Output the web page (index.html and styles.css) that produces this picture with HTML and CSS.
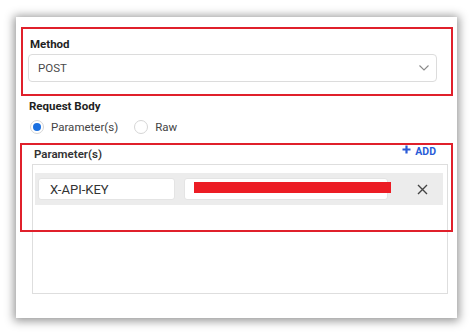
FILE: index.html
```html
<!DOCTYPE html>
<html>
<head>
<meta charset="utf-8">
<link rel="stylesheet" href="styles.css">
</head>
<body>
<div class="card">
  <div class="label">Method</div>
  <div class="select">
    <span>POST</span>
    <svg class="chev" width="10" height="6" viewBox="0 0 10 6"><path d="M0.5 0.5 L5 5 L9.5 0.5" fill="none" stroke="#8a8a8a" stroke-width="1.1"/></svg>
  </div>
  <div class="label rb">Request Body</div>
  <div class="radios">
    <label class="radio"><span class="dot on"></span>Parameter(s)</label>
    <label class="radio"><span class="dot"></span>Raw</label>
  </div>
  <div class="params-head">
    <span class="ph-label">Parameter(s)</span>
    <span class="add"><svg width="9" height="9" viewBox="0 0 9 9"><path d="M4.5 0.5 V8.5 M0.5 4.5 H8.5" stroke="#2a5bd7" stroke-width="2.2"/></svg>ADD</span>
  </div>
  <div class="params-box">
    <div class="param-row">
      <div class="input key">X-API-KEY</div>
      <div class="input value"><span class="redact"></span></div>
      <svg class="close" width="11" height="11" viewBox="0 0 11 11"><path d="M1 1 L10 10 M10 1 L1 10" stroke="#444" stroke-width="1.4"/></svg>
    </div>
  </div>
  <div class="annot a1"></div>
  <div class="annot a2"></div>
</div>
</body>
</html>
```
FILE: styles.css
```css
html, body { margin: 0; padding: 0; background: #fff; }
body {
  font-family: Roboto, "Noto Sans", sans-serif;
  font-size: 11.5px;
  color: #222;
  width: 474px;
  height: 334px;
  overflow: hidden;
}
.card {
  position: relative;
  margin: 17px 0 0 16px;
  width: 441px;
  height: 301px;
  box-sizing: border-box;
  padding: 19px 0 0 12px;
  background: #fff;
  box-shadow: 0 1px 9px 2px rgba(0,0,0,0.42);
}
.label {
  font-weight: 700;
  font-size: 11.5px;
  line-height: 16px;
  color: #1f1f1f;
  margin-left: 2px;
}
.select {
  margin-top: 2px;
  width: 409px;
  height: 28px;
  box-sizing: border-box;
  border: 1px solid #dcdcdc;
  border-radius: 4px;
  display: flex;
  align-items: center;
  justify-content: space-between;
  padding: 0 7px 0 9px;
  color: #4a4a4a;
  font-size: 11.5px;
}
.rb { margin-top: 16px; margin-left: 1px; }
.radios {
  margin-top: 4px;
  height: 18px;
  display: flex;
  align-items: center;
  color: #444;
}
.radio { display: flex; align-items: center; margin-right: 14px; }
.dot {
  width: 14px; height: 14px;
  box-sizing: border-box;
  border-radius: 50%;
  border: 1px solid #d6d6d6;
  margin: 0 7px 0 2px;
  background: #fff;
  position: relative;
}
.dot.on::after {
  content: "";
  position: absolute;
  left: 2px; top: 2px;
  width: 8px; height: 8px;
  border-radius: 50%;
  background: #1a6fe0;
}
.params-head {
  margin-top: 9px;
  width: 408px;
  height: 16px;
  display: flex;
  justify-content: space-between;
  align-items: center;
}
.ph-label {
  margin-left: 6px;
  font-weight: 600;
  color: #333;
  line-height: 16px;
  position: relative;
  top: 1px;
}
.add {
  display: flex;
  align-items: center;
  color: #2a5bd7;
  font-weight: 700;
  font-size: 10.5px;
  position: relative;
  top: -2px;
}
.add svg { margin-right: 4px; position: relative; top: -2px; }
.params-box {
  margin-top: 3px;
  margin-left: 4px;
  width: 416px;
  height: 130px;
  box-sizing: border-box;
  border: 1px solid #dedede;
  padding: 8px 4px 0 2px;
}
.param-row {
  height: 32px;
  background: #ececec;
  display: flex;
  align-items: center;
  padding: 0 3px;
}
.input {
  height: 22px;
  box-sizing: border-box;
  background: #fff;
  border: 1px solid #e4e4e4;
  border-radius: 3px;
  display: flex;
  align-items: center;
  color: #333;
  font-size: 13px;
}
.key { width: 137px; padding-left: 11px; }
.value { width: 204px; margin-left: 9px; position: relative; }
.redact {
  position: absolute;
  left: 9px; top: 3px;
  width: 197px; height: 11px;
  background: #ec1c24;
}
.close { margin-left: 29px; }
.annot {
  position: absolute;
  box-sizing: border-box;
  border: 2px solid #e0202b;
}
.a1 { left: 5px; top: 10px; width: 432px; height: 69px; }
.a2 { left: 4px; top: 126px; width: 433px; height: 89px; }
```
